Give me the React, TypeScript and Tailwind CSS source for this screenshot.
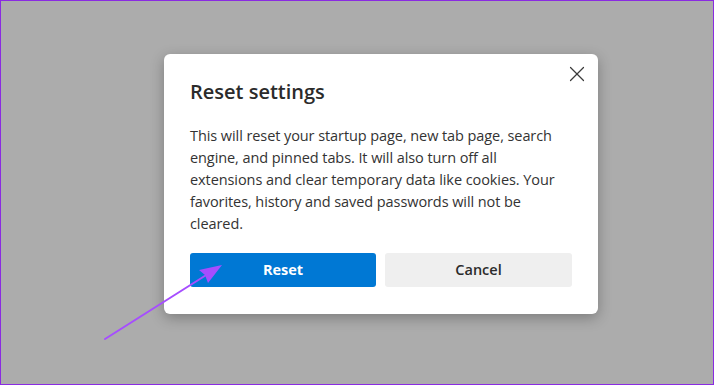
import { X } from "lucide-react";

const bodyLines = [
  "This will reset your startup page, new tab page, search",
  "engine, and pinned tabs. It will also turn off all",
  "extensions and clear temporary data like cookies. Your",
  "favorites, history and saved passwords will not be",
  "cleared.",
];

const ResetDialog = () => {
  return (
    <div className="relative w-[434px] h-[260px] rounded-md bg-white shadow-[0_4px_14px_rgba(0,0,0,0.28)] px-[26px] pt-[24px]">
      <button className="absolute right-[8px] top-[7px] flex h-[26px] w-[26px] items-center justify-center text-[#3b3b3b]">
        <X size={26} strokeWidth={1.1} />
      </button>
      <h2 className="text-[20px] leading-[28px] font-semibold text-[#2b2b2b]">
        Reset settings
      </h2>
      <p className="mt-[19px] text-[14.5px] leading-[22px] tracking-[-0.08px] text-[#333333]">
        {bodyLines.map((line) => (
          <span key={line} className="block whitespace-nowrap">
            {line}
          </span>
        ))}
      </p>
      <div className="mt-[18px] flex gap-[9px]">
        <button className="h-[34px] w-[186px] rounded-[3px] bg-[#0078d4] text-[14.5px] font-bold text-white">
          Reset
        </button>
        <button className="h-[34px] w-[187px] rounded-[3px] bg-[#efefef] text-[14.5px] font-semibold text-[#2b2b2b]">
          Cancel
        </button>
      </div>
    </div>
  );
};

const App = () => {
  return (
    <div
      className="relative h-[385px] w-[714px] overflow-hidden border border-[#8a2be2] bg-[#acacac] pl-[163px] pt-[53px]"
      style={{ fontFamily: '"Open Sans", "Noto Sans", Arial, sans-serif' }}
    >
      <ResetDialog />
      <svg
        className="absolute left-0 top-0 pointer-events-none"
        width="714"
        height="385"
        viewBox="0 0 714 385"
      >
        <line x1="104" y1="338" x2="210" y2="271" stroke="#a64dff" strokeWidth="2" strokeLinecap="round" />
        <path d="M221 264 L198 269 L204 274 L207 282 Z" fill="#a64dff" />
      </svg>
    </div>
  );
};

export default App;
